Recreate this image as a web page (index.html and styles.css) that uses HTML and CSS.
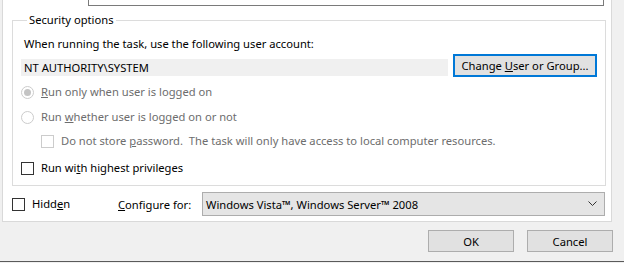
FILE: index.html
```html
<!DOCTYPE html>
<html lang="en">
<head>
    <meta charset="UTF-8">
    <title>Task Properties</title>
    <link rel="stylesheet" href="styles.css">
</head>
<body>
    <div class="dialog">
        <div class="panel">
            <div class="top-field"></div>

            <fieldset class="group">
                <legend>Security options</legend>
                <p class="account-label">When running the task, use the following user account:</p>
                <div class="account-row">
                    <div class="account-name">NT AUTHORITY\SYSTEM</div>
                    <button class="btn btn-focus">Change <u>U</u>ser or Group...</button>
                </div>

                <div class="option option-first disabled">
                    <span class="radio checked"></span>
                    <span><u>R</u>un only when user is logged on</span>
                </div>
                <div class="option disabled">
                    <span class="radio"></span>
                    <span>Run <u>w</u>hether user is logged on or not</span>
                </div>
                <div class="option option-sub disabled">
                    <span class="check"></span>
                    <span>Do not store <u>p</u>assword.&nbsp; The task will only have access to local computer resources.</span>
                </div>
                <div class="option option-last">
                    <span class="check"></span>
                    <span>Run wi<u>t</u>h highest privileges</span>
                </div>
            </fieldset>

            <div class="config-row">
                <div class="option hidden-opt">
                    <span class="check"></span>
                    <span>Hidd<u>e</u>n</span>
                </div>
                <span class="config-label"><u>C</u>onfigure for:</span>
                <div class="combo">
                    <span>Windows Vista™, Windows Server™ 2008</span>
                    <svg class="chevron" width="9" height="6" viewBox="0 0 9 6">
                        <path d="M0.5 0.5 L4.5 4.5 L8.5 0.5" fill="none" stroke="#333" stroke-width="1"/>
                    </svg>
                </div>
            </div>
        </div>

        <div class="actions">
            <button class="btn btn-action">OK</button>
            <button class="btn btn-action">Cancel</button>
        </div>
    </div>
</body>
</html>
```

FILE: styles.css
```css
body {
    margin: 0;
    background-color: #f0f0f0;
    font-family: 'Noto Sans', 'Liberation Sans', sans-serif;
    font-size: 11.2px;
    color: #000;
}

.dialog {
    height: 261px;
    border-bottom: 1px solid #5a5a5a;
}

.panel {
    margin-left: 2px;
    width: 608px;
    height: 221px;
    background-color: #fff;
    border: 1px solid #d9d9d9;
    border-top: none;
}

.top-field {
    margin-left: 85px;
    width: 514px;
    height: 5px;
    border: 1px solid #7a7a7a;
    border-top: none;
}

.group {
    margin: 6px 0 0 9px;
    padding: 0 8px;
    border: 1px solid #dcdcdc;
    box-sizing: border-box;
    width: 593px;
    height: 174px;
}

.group legend {
    margin-left: 6px;
    padding: 0 2px;
    line-height: 16px;
}

.account-label {
    margin: 8px 0 0 3px;
    line-height: 16px;
}

.account-row {
    display: flex;
    align-items: flex-start;
    gap: 5px;
    margin-top: 2px;
}

.account-name {
    width: 424px;
    height: 17px;
    margin-top: 5px;
    padding-left: 3px;
    line-height: 17px;
    background-color: #f0f0f0;
}

.btn {
    font-family: inherit;
    font-size: inherit;
    color: #000;
    background-color: #e1e1e1;
    border: 1px solid #adadad;
    padding: 0;
    box-sizing: border-box;
}

.btn-focus {
    width: 144px;
    height: 23px;
    border: 2px solid #0078d7;
}

.option {
    display: flex;
    align-items: center;
    gap: 7px;
    height: 16px;
    line-height: 16px;
}

.option-first {
    margin-top: 7px;
}

.option + .option {
    margin-top: 9px;
}

.option-sub {
    margin-left: 20px;
    margin-top: 8px !important;
}

.option-last {
    margin-top: 11px !important;
}

.disabled {
    color: #6d6d6d;
}

.radio,
.check {
    flex: none;
    width: 13px;
    height: 13px;
    border: 1px solid #333;
    box-sizing: border-box;
    background-color: #fff;
}

.radio {
    border-radius: 50%;
    display: flex;
    align-items: center;
    justify-content: center;
}

.disabled .radio,
.disabled .check {
    border-color: #cccccc;
}

.radio.checked::after {
    content: '';
    width: 7px;
    height: 7px;
    border-radius: 50%;
    background-color: #c4c4c4;
}

.config-row {
    display: flex;
    align-items: center;
    margin: 6px 0 0 9px;
}

.hidden-opt {
    width: 106px;
}

.config-label {
    width: 84px;
}

.combo {
    display: flex;
    align-items: center;
    justify-content: space-between;
    width: 403px;
    height: 24px;
    padding: 0 7px 0 3px;
    box-sizing: border-box;
    background-color: #e5e5e5;
    border: 1px solid #adadad;
}

.actions {
    display: flex;
    justify-content: flex-end;
    gap: 13px;
    margin: 8px 11px 0 0;
}

.btn-action {
    width: 86px;
    height: 22px;
}
```
